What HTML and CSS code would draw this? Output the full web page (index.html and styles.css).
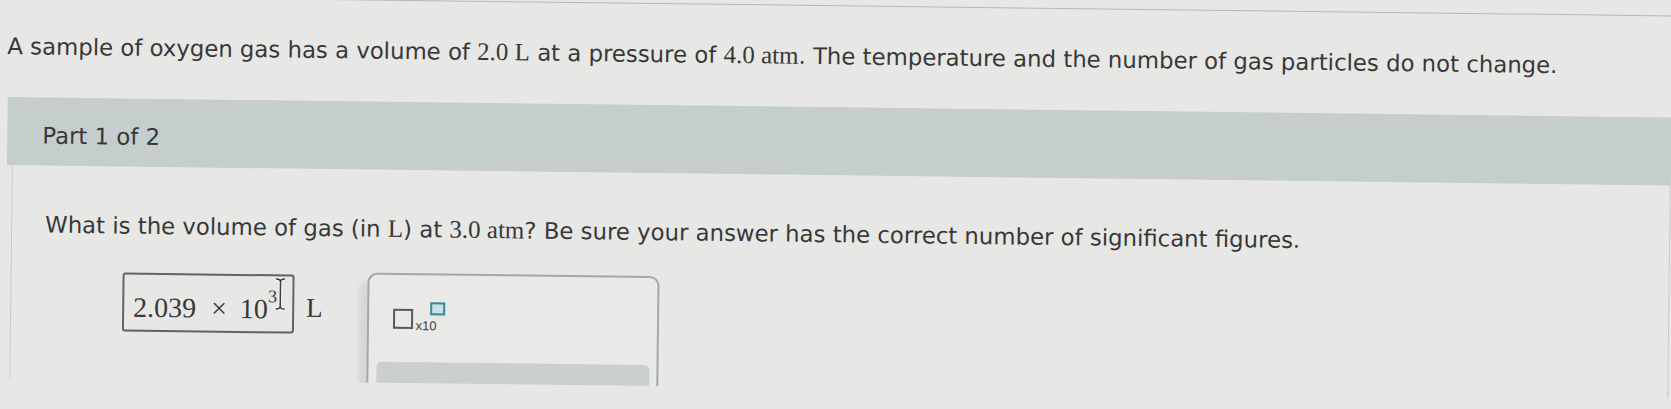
FILE: index.html
```html
<!DOCTYPE html>
<html lang="en">
<head>
<meta charset="utf-8">
<title>Part 1 of 2</title>
<link rel="stylesheet" href="styles.css">
</head>
<body>
<div class="page">
  <div class="top-rule"></div>
  <p class="intro">A sample of oxygen gas has a volume of <span class="m">2.0&nbsp;L</span> at a pressure of <span class="m">4.0&nbsp;atm</span>. The temperature and the number of gas particles do not change.</p>
  <section class="part">
    <header class="part-head">Part 1 of 2</header>
    <div class="part-body">
      <p class="question">What is the volume of gas (in <span class="m">L</span>) at <span class="m">3.0&nbsp;atm</span>? Be sure your answer has the correct number of significant figures.</p>
      <div class="answer-row">
        <div class="answer-box">
          <span class="num">2.039</span><span class="op">×</span><span class="num">10</span><span class="sup">3</span>
          <svg class="ibeam" width="10" height="33" viewBox="0 0 10 33" aria-hidden="true">
            <path d="M1 1.5 Q5 1.5 5 4.5 Q5 1.5 9 1.5 M5 4.5 V28.5 M1 31.5 Q5 31.5 5 28.5 Q5 31.5 9 31.5" fill="none" stroke="#f4f4f4" stroke-width="3.4" stroke-linecap="round"/>
            <path d="M1 1.5 Q5 1.5 5 4.5 Q5 1.5 9 1.5 M5 4.5 V28.5 M1 31.5 Q5 31.5 5 28.5 Q5 31.5 9 31.5" fill="none" stroke="#3c3c3c" stroke-width="1.5" stroke-linecap="round"/>
          </svg>
        </div>
        <span class="unit">L</span>
        <div class="palette">
          <div class="sci-icon">
            <span class="sq-big"></span><span class="x10">x10</span><span class="sq-small"></span>
          </div>
          <div class="palette-bar"></div>
        </div>
      </div>
    </div>
  </section>
</div>
</body>
</html>
```
FILE: styles.css
```css
html, body {
  margin: 0;
  padding: 0;
  height: 100%;
  overflow: hidden;
  background: #e7e7e5;
}

.page {
  width: 1700px;
  margin-top: -5px;
  transform-origin: 0 0;
  transform: rotate(0.7deg);
  font-family: "DejaVu Sans", Verdana, sans-serif;
  color: #383838;
}

.top-rule {
  height: 0;
  border-top: 1px solid #b7b7b7;
}

.intro {
  margin: 35px 0 0 8px;
  font-size: 22.8px;
  line-height: 30px;
  white-space: nowrap;
}

.m {
  font-family: "Liberation Serif", "Times New Roman", serif;
  font-size: 25px;
}

.part {
  margin: 36px 0 0 9px;
  width: 1664px;
}

.part-head {
  box-sizing: border-box;
  height: 68px;
  padding: 23px 0 0 35px;
  background: #c6cecd;
  font-size: 22.8px;
  line-height: 30px;
}

.part-body {
  box-sizing: border-box;
  height: 213px;
  margin-left: 5px;
  padding: 44px 0 0 33px;
  border-left: 1px solid #c9c9c9;
  border-right: 1px solid #c9c9c9;
  overflow: hidden;
}

.question {
  margin: 0;
  font-size: 22.8px;
  line-height: 30px;
  white-space: nowrap;
}

.answer-row {
  display: flex;
  align-items: flex-start;
  margin: 29px 0 0 78px;
}

.answer-box {
  position: relative;
  box-sizing: border-box;
  width: 172px;
  height: 59px;
  margin-top: 3px;
  padding-left: 9px;
  border: 2px solid #5d6565;
  border-radius: 3px;
  font-family: "Liberation Serif", "Times New Roman", serif;
  font-size: 28px;
  line-height: 65px;
  white-space: nowrap;
}

.op {
  margin: 0 13px 0 15px;
}

.sup {
  font-size: 18px;
  line-height: 18px;
  vertical-align: 16px;
}

.ibeam {
  position: absolute;
  left: 151px;
  top: 1px;
}

.unit {
  margin: 7px 0 0 12px;
  font-family: "Liberation Serif", "Times New Roman", serif;
  font-size: 27px;
  line-height: 59px;
}

.palette {
  box-sizing: border-box;
  width: 292px;
  height: 160px;
  margin-left: 44px;
  border: 2px solid #a6a6a6;
  border-radius: 10px;
  background: #e9e9e7;
  box-shadow: -8px 8px 5px rgba(0, 0, 0, 0.07);
}

.sci-icon {
  display: flex;
  align-items: flex-start;
  margin: 27px 0 0 24px;
}

.sq-big {
  box-sizing: border-box;
  width: 20px;
  height: 20px;
  margin-top: 7px;
  border: 2px solid #5a5a5a;
}

.x10 {
  margin: 17px 0 0 3px;
  font-family: "Liberation Sans", Arial, sans-serif;
  font-size: 13px;
  line-height: 13px;
  color: #444;
}

.sq-small {
  box-sizing: border-box;
  width: 15px;
  height: 13px;
  margin-left: -6px;
  border: 2px solid #3f8795;
  background: #c5e3e8;
}

.palette-bar {
  height: 40px;
  margin: 30px 7px 0 8px;
  border-radius: 5px 5px 0 0;
  background: #cbd0cf;
}
```
